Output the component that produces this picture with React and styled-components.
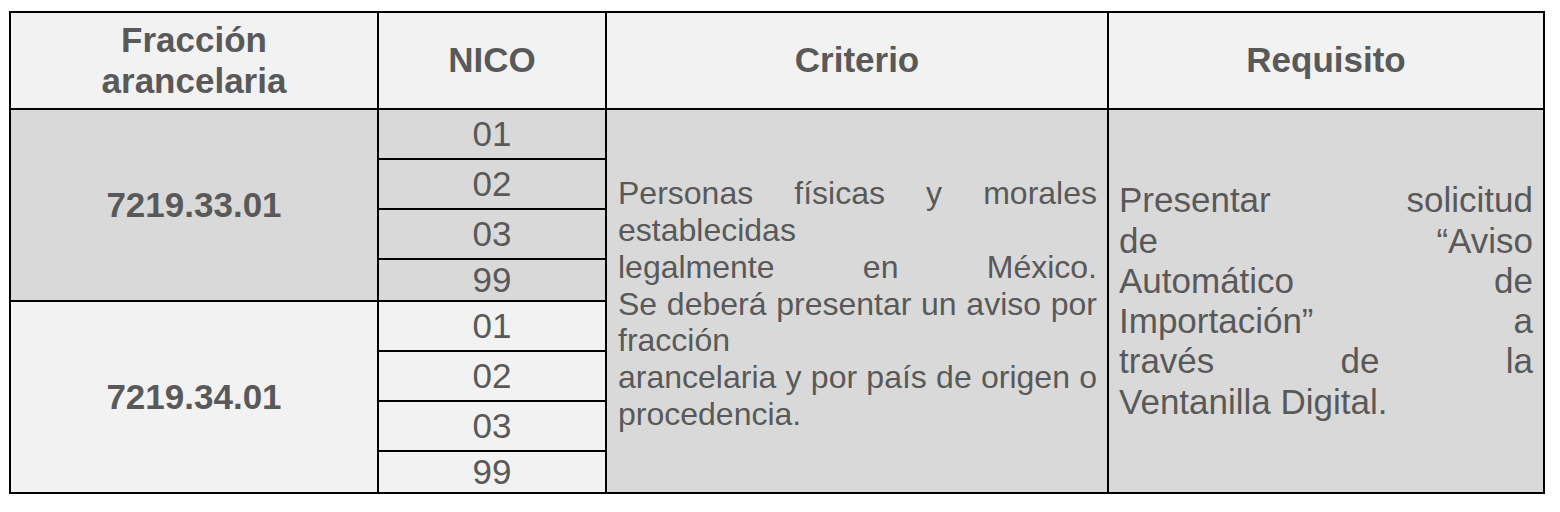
import React from 'react'
import styled, { createGlobalStyle } from 'styled-components'

const GlobalStyle = createGlobalStyle`
  body {
    margin: 0;
    background: #ffffff;
    font-family: 'Liberation Sans', Arial, sans-serif;
  }
`

const Page = styled.div`
  padding: 11px 0 0 9px;
`

const Grid = styled.div`
  display: grid;
  width: max-content;
  grid-template-columns: 366px 226px 500px 434px;
  grid-template-rows: 95px 48px 48px 48px 40px 48px 48px 48px 40px;
  gap: 2px;
  padding: 2px;
  background: #000000;
  color: #595959;
`

const Cell = styled.div`
  display: flex;
  align-items: center;
  justify-content: center;
  text-align: center;
  background: ${({ $shade }) => ($shade ? '#d9d9d9' : '#f2f2f2')};
  grid-row: ${({ $span }) => ($span ? `span ${$span}` : 'auto')};
  font-size: 35px;
  line-height: 1.15;
  font-weight: ${({ $bold }) => ($bold ? 700 : 400)};
`

const TextCell = styled.div`
  display: flex;
  flex-direction: column;
  justify-content: center;
  background: #d9d9d9;
  grid-row: span 8;
  padding: ${({ $pad }) => $pad};
  font-size: ${({ $size }) => $size}px;
  line-height: 1.15;
`

const Line = styled.div`
  white-space: nowrap;
  text-align: ${({ $justify }) => ($justify ? 'justify' : 'left')};
  text-align-last: ${({ $justify }) => ($justify ? 'justify' : 'left')};
`

const headers = [['Fracción', 'arancelaria'], ['NICO'], ['Criterio'], ['Requisito']]

const criterio = [
  ['Personas físicas y morales', true],
  ['establecidas', false],
  ['legalmente en México.', true],
  ['Se deberá presentar un aviso por', true],
  ['fracción', false],
  ['arancelaria y por país de origen o', true],
  ['procedencia.', false],
]

const requisito = [
  ['Presentar solicitud', true],
  ['de “Aviso', true],
  ['Automático de', true],
  ['Importación” a', true],
  ['través de la', true],
  ['Ventanilla Digital.', false],
]

const nicos = ['01', '02', '03', '99']

const App = () => {
  return (
    <Page>
      <GlobalStyle />
      <Grid>
        {headers.map((lines) => (
          <Cell key={lines[0]} $bold>
            <div>
              {lines.map((l) => (
                <div key={l}>{l}</div>
              ))}
            </div>
          </Cell>
        ))}

        <Cell $shade $bold $span={4}>7219.33.01</Cell>
        <Cell $shade>01</Cell>
        <TextCell $size={32} $pad="6px 10px 0 11px">
          {criterio.map(([text, justify]) => (
            <Line key={text} $justify={justify}>{text}</Line>
          ))}
        </TextCell>
        <TextCell $size={35} $pad="0 10px 0 10px">
          {requisito.map(([text, justify]) => (
            <Line key={text} $justify={justify}>{text}</Line>
          ))}
        </TextCell>
        {nicos.slice(1).map((n) => (
          <Cell key={'a' + n} $shade>{n}</Cell>
        ))}

        <Cell $bold $span={4}>7219.34.01</Cell>
        {nicos.map((n) => (
          <Cell key={'b' + n}>{n}</Cell>
        ))}
      </Grid>
    </Page>
  )
}

export default App
